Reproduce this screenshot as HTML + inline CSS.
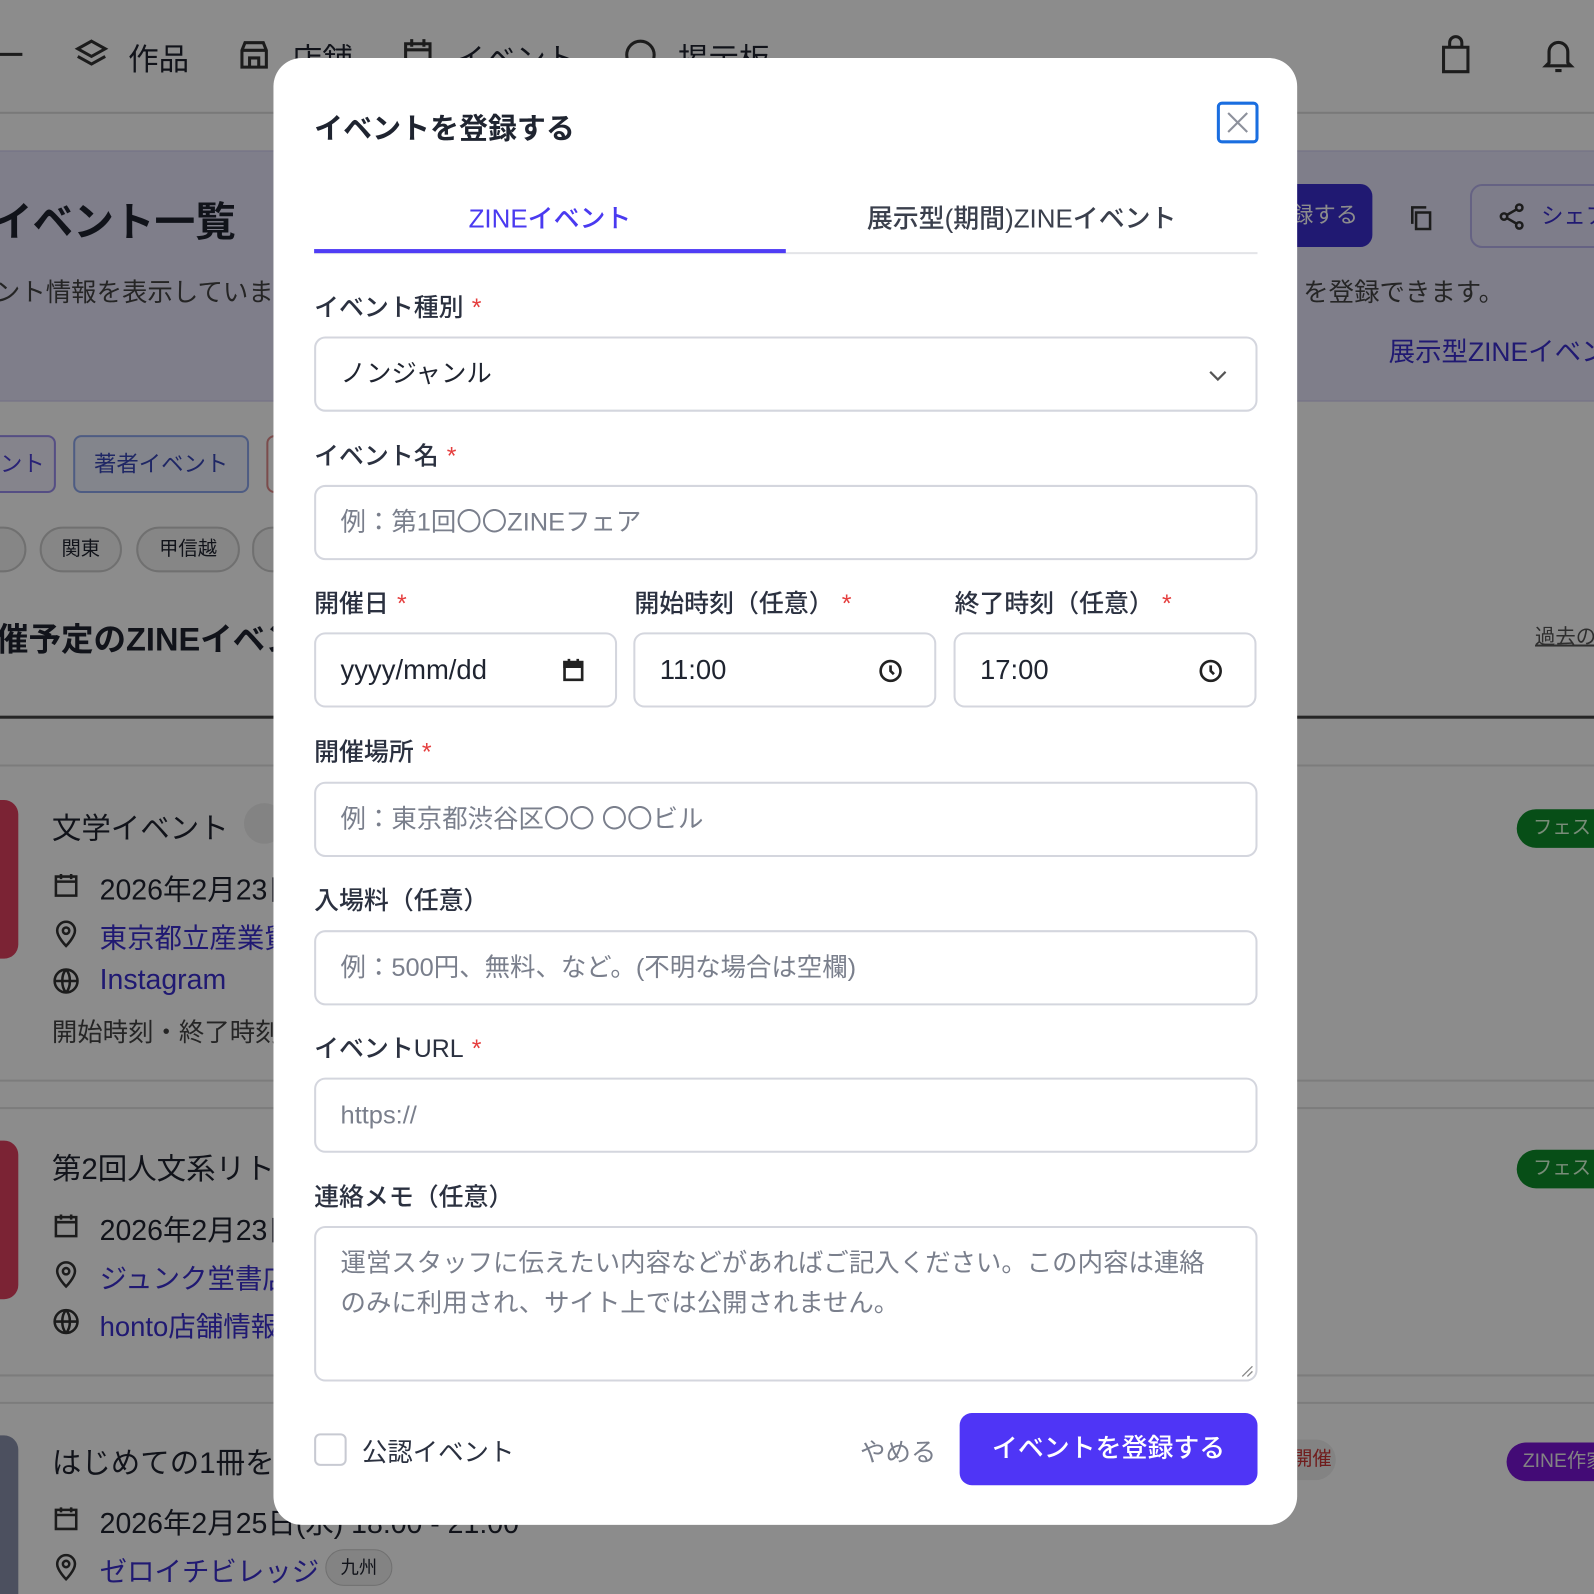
<!DOCTYPE html>
<html><head><meta charset="utf-8"><style>
*{box-sizing:border-box;margin:0;padding:0}
html,body{width:1594px;height:1594px;overflow:hidden;background:#fff}
body{font-family:"Liberation Sans","Noto Sans CJK JP",sans-serif;color:#1f2430}
#w{position:absolute;left:0;top:0;width:1568px;height:1568px;transform:scale(1.01658);transform-origin:0 0;overflow:hidden;background:#fff}
.a{position:absolute;white-space:nowrap}
.ov{position:absolute;left:0;top:0;width:1568px;height:1568px;background:rgba(0,0,0,.45)}
.m{position:absolute;left:269px;top:57px;width:1007px;height:1443px;background:#fff;border-radius:28px}
.lb{position:absolute;left:40px;font-size:24.5px;color:#2b3140;line-height:1;font-weight:500}
.lb b{color:#e53e3e;font-weight:normal;margin-left:8px}
.in{position:absolute;left:40px;width:928px;height:74px;border:2px solid #d4d6de;border-radius:11px;font-size:25px;color:#7a7f8c;padding-left:24px;line-height:70px}
.ic{stroke:#333;fill:none;stroke-width:2}
</style></head><body><div id="w">
<!-- background page -->
<div class="a" style="left:0;top:110px;width:1568px;height:2px;background:#ddd"></div>
<div class="a" style="left:0;top:52px;width:22px;height:3px;background:#333"></div>
<svg class="a" style="left:72px;top:36px" width="36" height="36" viewBox="0 0 24 24"><path class="ic" d="M12 3l9 5-9 5-9-5z M3 13l9 5 9-5"/></svg>
<div class="a" style="left:126px;top:34px;font-size:30px">作品</div>
<svg class="a" style="left:232px;top:36px" width="36" height="36" viewBox="0 0 24 24"><path class="ic" d="M4 9l2-5h12l2 5v11H4z M4 9h16 M9 20v-6h6v6"/></svg>
<div class="a" style="left:287px;top:34px;font-size:30px">店舗</div>
<svg class="a" style="left:393px;top:34px" width="36" height="36" viewBox="0 0 24 24"><path class="ic" d="M4 6h16v14H4z M4 10h16 M8 3v5 M16 3v5"/></svg>
<div class="a" style="left:447px;top:34px;font-size:30px">イベント</div>
<svg class="a" style="left:612px;top:36px" width="36" height="36" viewBox="0 0 24 24"><circle class="ic" cx="12" cy="12" r="9"/></svg>
<div class="a" style="left:667px;top:34px;font-size:30px">掲示板</div>
<svg class="a" style="left:1414px;top:34px" width="36" height="40" viewBox="0 0 24 26"><path class="ic" d="M4 8h16v16H4z M8 8V5a4 4 0 018 0v3"/></svg>
<svg class="a" style="left:1514px;top:34px" width="38" height="40" viewBox="0 0 24 26"><path class="ic" d="M6 18V11a6 6 0 0112 0v7l2 2H4z M10 23h4"/></svg>
<div class="a" style="left:-10px;top:148px;width:1600px;height:247px;background:#e8e6fb;border:1px solid #cfcaf3"></div>
<div class="a" style="left:-8px;top:186px;font-size:40px;font-weight:bold">イベント一覧</div>
<div class="a" style="left:-5px;top:268px;font-size:25px;color:#444">ント情報を表示していま</div>
<div class="a" style="left:1240px;top:181px;width:110px;height:62px;background:#3b2fd0;border-radius:12px;color:#fff;font-size:22px;line-height:62px;padding-left:30px">録する</div>
<svg class="a" style="left:1383px;top:198px" width="30" height="32" viewBox="0 0 24 24"><path class="ic" d="M8 8h11v13H8z M5 17V4h11"/></svg>
<div class="a" style="left:1446px;top:181px;width:140px;height:63px;background:#e6e4fb;border:2px solid #b8b3ee;border-radius:12px;color:#3b2fd0;font-size:22px;line-height:59px;padding-left:68px">シェア</div>
<svg class="a" style="left:1472px;top:198px" width="30" height="30" viewBox="0 0 24 24"><circle class="ic" cx="18" cy="5" r="2.5"/><circle class="ic" cx="6" cy="12" r="2.5"/><circle class="ic" cx="18" cy="19" r="2.5"/><path class="ic" d="M8.2 10.8l7.6-4.4 M8.2 13.2l7.6 4.4"/></svg>
<div class="a" style="left:1282px;top:268px;font-size:25px;color:#444">を登録できます。</div>
<div class="a" style="left:1366px;top:326px;font-size:26px;color:#3b2fd0">展示型ZINEイベント</div>
<div class="a" style="left:-20px;top:428px;width:75px;height:57px;border:2px solid #9b8ff0;border-radius:8px;background:#f3f1ff;color:#4b3fd8;font-size:22px;line-height:53px;padding-left:18px">ント</div>
<div class="a" style="left:72px;top:428px;width:173px;height:57px;border:2px solid #8fa8ee;border-radius:8px;background:#eef2ff;color:#3947b8;font-size:22px;line-height:53px;text-align:center">著者イベント</div>
<div class="a" style="left:262px;top:428px;width:20px;height:57px;border:2px solid #e08a8a;border-radius:8px"></div>
<div class="a" style="left:-40px;top:518px;width:66px;height:45px;border:2px solid #ccc;border-radius:23px;background:#f4f4f4"></div>
<div class="a" style="left:39px;top:518px;width:81px;height:45px;border:2px solid #ccc;border-radius:23px;background:#f4f4f4;font-size:19px;line-height:41px;text-align:center">関東</div>
<div class="a" style="left:134px;top:518px;width:102px;height:45px;border:2px solid #ccc;border-radius:23px;background:#f4f4f4;font-size:19px;line-height:41px;text-align:center">甲信越</div>
<div class="a" style="left:248px;top:518px;width:40px;height:45px;border:2px solid #ccc;border-radius:23px;background:#f4f4f4"></div>
<div class="a" style="left:-4px;top:604px;font-size:32px;font-weight:bold">催予定のZINEイベント</div>
<div class="a" style="left:1510px;top:610px;font-size:20px;color:#555;text-decoration:underline">過去の</div>
<div class="a" style="left:0;top:704px;width:1568px;height:3px;background:#444"></div>
<div class="a" style="left:0;top:752px;width:1568px;height:2px;background:#e2e2e2"></div>
<div class="a" style="left:-20px;top:787px;width:38px;height:156px;background:#e0405f;border-radius:14px"></div>
<div class="a" style="left:51px;top:792px;font-size:29px">文学イベント</div>
<div class="a" style="left:240px;top:790px;width:40px;height:40px;border-radius:20px;background:#eee"></div>
<div class="a" style="left:98px;top:854px;font-size:28px">2026年2月23日</div>
<div class="a" style="left:98px;top:901px;font-size:27px;color:#3b2fd0">東京都立産業貿易</div>
<div class="a" style="left:98px;top:948px;font-size:28px;color:#3b2fd0">Instagram</div>
<div class="a" style="left:51px;top:996px;font-size:25px;color:#444">開始時刻・終了時刻</div>
<div class="a" style="left:0;top:1062px;width:1568px;height:2px;background:#e2e2e2"></div>
<div class="a" style="left:0;top:1089px;width:1568px;height:2px;background:#e2e2e2"></div>
<div class="a" style="left:-20px;top:1122px;width:38px;height:156px;background:#e0405f;border-radius:14px"></div>
<div class="a" style="left:51px;top:1127px;font-size:29px">第2回人文系リトルプレス</div>
<div class="a" style="left:98px;top:1189px;font-size:28px">2026年2月23日</div>
<div class="a" style="left:98px;top:1236px;font-size:27px;color:#3b2fd0">ジュンク堂書店</div>
<div class="a" style="left:98px;top:1283px;font-size:27px;color:#3b2fd0">honto店舗情報</div>
<div class="a" style="left:0;top:1352px;width:1568px;height:2px;background:#e2e2e2"></div>
<div class="a" style="left:0;top:1379px;width:1568px;height:2px;background:#e2e2e2"></div>
<div class="a" style="left:-20px;top:1412px;width:38px;height:170px;background:#8a93ad;border-radius:14px"></div>
<div class="a" style="left:51px;top:1416px;font-size:29px">はじめての1冊を作る</div>
<div class="a" style="left:98px;top:1477px;font-size:28px">2026年2月25日(水) 18:00 - 21:00</div>
<div class="a" style="left:98px;top:1524px;font-size:27px;color:#3b2fd0">ゼロイチビレッジ</div>
<div class="a" style="left:320px;top:1524px;width:66px;height:36px;border-radius:18px;background:#eee;border:1px solid #ccc;font-size:18px;line-height:34px;text-align:center">九州</div>
<svg class="a" style="left:50px;top:856px" width="30" height="30" viewBox="0 0 24 24"><path class="ic" d="M4 5h16v15H4z M4 9h16 M8 3v4 M16 3v4"/></svg>
<svg class="a" style="left:50px;top:903px" width="30" height="30" viewBox="0 0 24 24"><path class="ic" d="M12 22s7-7 7-12a7 7 0 00-14 0c0 5 7 12 7 12z"/><circle class="ic" cx="12" cy="10" r="2.5"/></svg>
<svg class="a" style="left:50px;top:950px" width="30" height="30" viewBox="0 0 24 24"><circle class="ic" cx="12" cy="12" r="9"/><path class="ic" d="M3 12h18 M12 3c4 4 4 14 0 18 M12 3c-4 4-4 14 0 18"/></svg>
<svg class="a" style="left:50px;top:1191px" width="30" height="30" viewBox="0 0 24 24"><path class="ic" d="M4 5h16v15H4z M4 9h16 M8 3v4 M16 3v4"/></svg>
<svg class="a" style="left:50px;top:1238px" width="30" height="30" viewBox="0 0 24 24"><path class="ic" d="M12 22s7-7 7-12a7 7 0 00-14 0c0 5 7 12 7 12z"/><circle class="ic" cx="12" cy="10" r="2.5"/></svg>
<svg class="a" style="left:50px;top:1285px" width="30" height="30" viewBox="0 0 24 24"><circle class="ic" cx="12" cy="12" r="9"/><path class="ic" d="M3 12h18 M12 3c4 4 4 14 0 18 M12 3c-4 4-4 14 0 18"/></svg>
<svg class="a" style="left:50px;top:1479px" width="30" height="30" viewBox="0 0 24 24"><path class="ic" d="M4 5h16v15H4z M4 9h16 M8 3v4 M16 3v4"/></svg>
<svg class="a" style="left:50px;top:1526px" width="30" height="30" viewBox="0 0 24 24"><path class="ic" d="M12 22s7-7 7-12a7 7 0 00-14 0c0 5 7 12 7 12z"/><circle class="ic" cx="12" cy="10" r="2.5"/></svg>
<div class="a" style="left:1492px;top:796px;width:100px;height:38px;border-radius:19px;background:#0d8f2a;color:#dfd;font-size:19px;line-height:38px;padding-left:16px">フェス</div>
<div class="a" style="left:1492px;top:1131px;width:100px;height:38px;border-radius:19px;background:#0d8f2a;color:#dfd;font-size:19px;line-height:38px;padding-left:16px">フェス</div>
<div class="a" style="left:1482px;top:1419px;width:110px;height:38px;border-radius:19px;background:#7a14d8;color:#eee;font-size:19px;line-height:38px;padding-left:16px">ZINE作家</div>
<div class="a" style="left:1250px;top:1416px;width:64px;height:40px;border-radius:20px;background:#eee;color:#c33;font-size:19px;line-height:40px;padding-left:22px">開催</div>
<div class="ov"></div>
<!-- modal -->
<div class="m">
<div class="a" style="left:40px;top:47px;font-size:28.5px;font-weight:bold;color:#1f2430">イベントを登録する</div>
<div class="a" style="left:928px;top:43px;width:41px;height:41px;border:3px solid #1a6ee0;border-radius:5px"></div>
<svg class="a" style="left:936px;top:51px" width="25" height="25" viewBox="0 0 24 24"><path d="M3 3l18 18M21 3L3 21" stroke="#8d919c" stroke-width="2"/></svg>
<div class="a" style="left:40px;top:138px;width:464px;text-align:center;font-size:25.5px;color:#4a3af0;font-weight:500">ZINEイベント</div>
<div class="a" style="left:504px;top:138px;width:464px;text-align:center;font-size:25.5px;color:#3a3f4c;font-weight:500">展示型(期間)ZINEイベント</div>
<div class="a" style="left:40px;top:191px;width:928px;height:2px;background:#e3e4e8"></div>
<div class="a" style="left:40px;top:188px;width:464px;height:4px;background:#4f3df5"></div>
<div class="lb" style="top:235px">イベント種別<b>*</b></div>
<div class="in" style="top:274px;color:#1f2430">ノンジャンル</div>
<svg class="a" style="left:916px;top:299px" width="26" height="26" viewBox="0 0 24 24"><path d="M5 9l7 7 7-7" stroke="#555" stroke-width="2" fill="none"/></svg>
<div class="lb" style="top:381px">イベント名<b>*</b></div>
<div class="in" style="top:420px">例：第1回〇〇ZINEフェア</div>
<div class="lb" style="top:526px">開催日<b>*</b></div>
<div class="lb" style="top:526px;left:355px">開始時刻（任意）<b>*</b></div>
<div class="lb" style="top:526px;left:670px">終了時刻（任意）<b>*</b></div>
<div class="in" style="top:565px;width:298px;color:#1f2430;font-size:27px">yyyy/mm/dd</div>
<div class="in" style="top:565px;left:354px;width:298px;color:#1f2430;font-size:27px">11:00</div>
<div class="in" style="top:565px;left:669px;width:298px;color:#1f2430;font-size:27px">17:00</div>
<svg class="a" style="left:282px;top:589px" width="26" height="26" viewBox="0 0 24 24"><path d="M4 5h16v16H4z" stroke="#222" stroke-width="2.4" fill="none"/><path d="M4 5h16v4H4z M8 2v4 M16 2v4" stroke="#222" stroke-width="2.4" fill="#222"/></svg>
<svg class="a" style="left:594px;top:590px" width="26" height="26" viewBox="0 0 24 24"><circle cx="12" cy="12" r="9" stroke="#222" stroke-width="2.4" fill="none"/><path d="M12 7v5l3 3" stroke="#222" stroke-width="2.4" fill="none"/></svg>
<svg class="a" style="left:909px;top:590px" width="26" height="26" viewBox="0 0 24 24"><circle cx="12" cy="12" r="9" stroke="#222" stroke-width="2.4" fill="none"/><path d="M12 7v5l3 3" stroke="#222" stroke-width="2.4" fill="none"/></svg>
<div class="lb" style="top:672px">開催場所<b>*</b></div>
<div class="in" style="top:712px">例：東京都渋谷区〇〇 〇〇ビル</div>
<div class="lb" style="top:818px">入場料（任意）</div>
<div class="in" style="top:858px">例：500円、無料、など。(不明な場合は空欄)</div>
<div class="lb" style="top:964px">イベントURL<b>*</b></div>
<div class="in" style="top:1003px">https://</div>
<div class="lb" style="top:1110px">連絡メモ（任意）</div>
<div class="in" style="top:1149px;height:153px;line-height:39px;padding-top:16px;white-space:normal;padding-right:36px">運営スタッフに伝えたい内容などがあればご記入ください。この内容は連絡のみに利用され、サイト上では公開されません。</div>
<svg class="a" style="left:950px;top:1284px" width="14" height="14" viewBox="0 0 14 14"><path d="M13 3L3 13M13 8L8 13" stroke="#888" stroke-width="1.3"/></svg>
<div class="a" style="left:40px;top:1353px;width:32px;height:32px;border:2px solid #c8cad2;border-radius:6px"></div>
<div class="a" style="left:87px;top:1352px;font-size:25px;color:#2b3140">公認イベント</div>
<div class="a" style="left:577px;top:1352px;font-size:25px;color:#7a7f8c">やめる</div>
<div class="a" style="left:675px;top:1333px;width:293px;height:71px;background:#4f35f6;border-radius:12px;color:#fff;font-size:25.5px;line-height:71px;text-align:center;font-weight:500">イベントを登録する</div>
</div>
</div></body></html>
